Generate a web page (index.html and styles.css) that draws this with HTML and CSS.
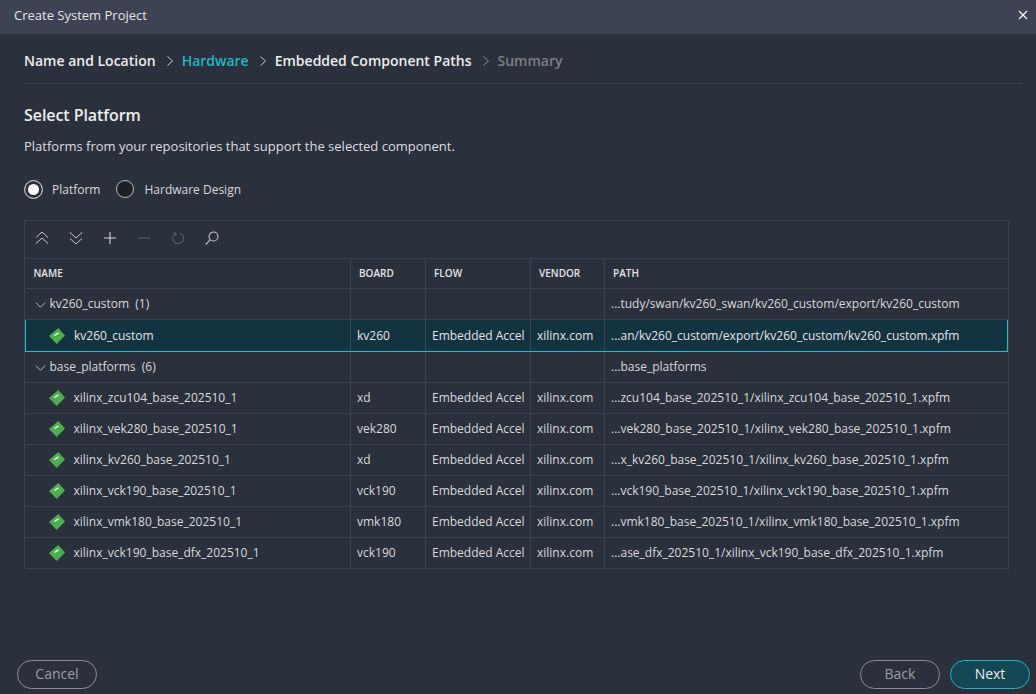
FILE: index.html
```html
<!DOCTYPE html>
<html lang="en">
<head>
<meta charset="utf-8">
<title>Create System Project</title>
<link rel="stylesheet" href="styles.css">
</head>
<body>
<svg class="defs" width="0" height="0">
  <defs>
    <symbol id="plat" viewBox="0 0 16 16">
      <path d="M9.300 0 16 7.600 7.700 16 0 8Z" fill="#4cae4f"/>
      <path d="M5.400 7.500 9.500 4.800" stroke="#fff" stroke-width="1.400" fill="none"/>
    </symbol>
    <symbol id="chev" viewBox="0 0 12 12">
      <path d="M1 4 6 9 11 4" fill="none" stroke="#c4c7cd" stroke-width="1"/>
    </symbol>
  </defs>
</svg>
<div class="dialog">
  <header class="titlebar">
    <span>Create System Project</span>
    <svg class="close" width="10" height="10" viewBox="0 0 10 10"><path d="M1 1 9 9M9 1 1 9" stroke="#fff" stroke-width="1.2"/></svg>
  </header>
  <main class="content">
    <nav class="steps">
      <span class="step">Name and Location</span>
      <svg class="sep" width="8" height="12" viewBox="0 0 8 12"><path d="M1.5 1.5 6.500 6 1.500 10.500" fill="none" stroke="#c4c7cd"/></svg>
      <span class="step active">Hardware</span>
      <svg class="sep" width="8" height="12" viewBox="0 0 8 12"><path d="M1.5 1.5 6.500 6 1.500 10.500" fill="none" stroke="#c4c7cd"/></svg>
      <span class="step">Embedded Component Paths</span>
      <svg class="sep" width="8" height="12" viewBox="0 0 8 12"><path d="M1.5 1.5 6.500 6 1.500 10.500" fill="none" stroke="#8b8f99"/></svg>
      <span class="step muted">Summary</span>
    </nav>
    <h1 class="heading">Select Platform</h1>
    <p class="desc">Platforms from your repositories that support the selected component.</p>
    <div class="radios">
      <span class="radio on"></span><span class="radio-label">Platform</span>
      <span class="radio"></span><span class="radio-label">Hardware Design</span>
    </div>
    <section class="panel">
      <div class="toolbar">
        <svg width="18" height="18" viewBox="0 0 18 18"><path d="M3 8.500 9 3 15 8.500M3 14.500 9 9 15 14.500" fill="none" stroke="#c4c7cd"/></svg>
        <svg width="18" height="18" viewBox="0 0 18 18"><path d="M3 3.500 9 9 15 3.500M3 9.500 9 15 15 9.500" fill="none" stroke="#c4c7cd"/></svg>
        <svg width="18" height="18" viewBox="0 0 18 18"><path d="M9 3V15M3 9H15" fill="none" stroke="#d4d6da" stroke-width="1.100"/></svg>
        <svg width="18" height="18" viewBox="0 0 18 18"><path d="M3 9H15" fill="none" stroke="#565b67" stroke-width="1.100"/></svg>
        <svg width="18" height="18" viewBox="0 0 18 18"><path d="M6.500 4.300A5.500 5.500 0 1 0 11 3.900M4.800 3.300 7.200 4.400 6 6.800" fill="none" stroke="#565b67" stroke-width="1.100"/></svg>
        <svg width="18" height="18" viewBox="0 0 18 18"><circle cx="10.500" cy="7.500" r="4.500" fill="none" stroke="#c4c7cd" stroke-width="1.100"/><path d="M7.300 10.700 2.800 15.500" stroke="#c4c7cd" stroke-width="1.100"/></svg>
      </div>
      <table class="grid">
        <colgroup>
          <col class="c-name"><col class="c-board"><col class="c-flow"><col class="c-vendor"><col class="c-path">
        </colgroup>
        <thead>
          <tr><th>NAME</th><th>BOARD</th><th>FLOW</th><th>VENDOR</th><th>PATH</th></tr>
        </thead>
        <tbody>
          <tr class="group">
            <td><svg class="chev"><use href="#chev"/></svg>kv260_custom&nbsp; (1)</td><td></td><td></td><td></td>
            <td>...tudy/swan/kv260_swan/kv260_custom/export/kv260_custom</td>
          </tr>
          <tr class="selected">
            <td class="leaf"><svg class="plat"><use href="#plat"/></svg>kv260_custom</td><td>kv260</td><td>Embedded Accel</td><td>xilinx.com</td>
            <td>...an/kv260_custom/export/kv260_custom/kv260_custom.xpfm</td>
          </tr>
          <tr class="group">
            <td><svg class="chev"><use href="#chev"/></svg>base_platforms&nbsp; (6)</td><td></td><td></td><td></td>
            <td>...base_platforms</td>
          </tr>
          <tr>
            <td class="leaf"><svg class="plat"><use href="#plat"/></svg>xilinx_zcu104_base_202510_1</td><td>xd</td><td>Embedded Accel</td><td>xilinx.com</td>
            <td>...zcu104_base_202510_1/xilinx_zcu104_base_202510_1.xpfm</td>
          </tr>
          <tr>
            <td class="leaf"><svg class="plat"><use href="#plat"/></svg>xilinx_vek280_base_202510_1</td><td>vek280</td><td>Embedded Accel</td><td>xilinx.com</td>
            <td>...vek280_base_202510_1/xilinx_vek280_base_202510_1.xpfm</td>
          </tr>
          <tr>
            <td class="leaf"><svg class="plat"><use href="#plat"/></svg>xilinx_kv260_base_202510_1</td><td>xd</td><td>Embedded Accel</td><td>xilinx.com</td>
            <td>...x_kv260_base_202510_1/xilinx_kv260_base_202510_1.xpfm</td>
          </tr>
          <tr>
            <td class="leaf"><svg class="plat"><use href="#plat"/></svg>xilinx_vck190_base_202510_1</td><td>vck190</td><td>Embedded Accel</td><td>xilinx.com</td>
            <td>...vck190_base_202510_1/xilinx_vck190_base_202510_1.xpfm</td>
          </tr>
          <tr>
            <td class="leaf"><svg class="plat"><use href="#plat"/></svg>xilinx_vmk180_base_202510_1</td><td>vmk180</td><td>Embedded Accel</td><td>xilinx.com</td>
            <td>...vmk180_base_202510_1/xilinx_vmk180_base_202510_1.xpfm</td>
          </tr>
          <tr>
            <td class="leaf"><svg class="plat"><use href="#plat"/></svg>xilinx_vck190_base_dfx_202510_1</td><td>vck190</td><td>Embedded Accel</td><td>xilinx.com</td>
            <td>...ase_dfx_202510_1/xilinx_vck190_base_dfx_202510_1.xpfm</td>
          </tr>
        </tbody>
      </table>
    </section>
  </main>
  <footer class="actions">
    <button class="btn">Cancel</button>
    <span class="spacer"></span>
    <button class="btn">Back</button>
    <button class="btn primary">Next</button>
  </footer>
</div>
</body>
</html>
```

FILE: styles.css
```css
html, body {
  margin: 0;
  height: 100%;
  overflow: hidden;
}
body {
  background: #2b303d;
  color: #e3e4e7;
  font-family: "Open Sans", "Noto Sans", sans-serif;
  font-size: 12px;
}
.defs { position: absolute; }
.dialog {
  height: 694px;
  display: flex;
  flex-direction: column;
}
.titlebar {
  flex: none;
  height: 34px;
  background: #3d4353;
  display: flex;
  align-items: center;
  justify-content: space-between;
  padding: 0 8px 4px 14px;
  box-sizing: border-box;
  font-size: 13px;
  color: #e3e4e7;
}
.content {
  flex: 1;
  padding: 0 13px 0 24px;
  min-height: 0;
}
.steps {
  height: 50px;
  box-sizing: border-box;
  padding-top: 4px;
  border-bottom: 1px solid #3d4250;
  display: flex;
  align-items: center;
  font-size: 14px;
  font-weight: 600;
  color: #eceded;
}
.sep { margin: 1px 8px 0 10px; }
.step.active { color: #1fb8c3; }
.step.muted { color: #7b7f89; }
.heading {
  margin: 20px 0 0;
  font-size: 16px;
  font-weight: 600;
  letter-spacing: -0.07px;
  line-height: 22px;
  color: #eceded;
}
.desc {
  margin: 11px 0 0;
  font-size: 13px;
  line-height: 18px;
  color: #dcdde0;
}
.radios {
  margin-top: 24px;
  height: 20px;
  display: flex;
  align-items: center;
}
.radio {
  width: 16px;
  height: 16px;
  border: 1px solid #b9bbc0;
  border-radius: 50%;
  background: #1d1f26;
  flex: none;
}
.radio.on {
  width: 17px;
  height: 17px;
  background: #fff;
  box-shadow: inset 0 0 0 3px #2b303d;
}
.radio.on + .radio-label { margin-left: 9px; }
.radio-label {
  margin: 0 16px 0 10px;
  color: #d8d9dc;
  font-size: 12px;
}
.panel {
  margin: 21px 14px 0 0;
  border: 1px solid #3d4250;
  border-bottom: 0;
}
.toolbar {
  height: 37px;
  display: flex;
  align-items: center;
  gap: 16px;
  padding: 0 8px 3px;
  box-sizing: border-box;
}
.grid {
  width: 100%;
  border-collapse: collapse;
  table-layout: fixed;
}
.c-name { width: 325px; }
.c-board { width: 75px; }
.c-flow { width: 105px; }
.c-vendor { width: 74px; }
th, td {
  border: 1px solid #3d4250;
  padding: 0 6px 2px;
  height: 31px;
  box-sizing: border-box;
  white-space: nowrap;
  overflow: hidden;
  text-align: left;
  color: #d8d9dc;
  font-weight: 400;
}
th:first-child, td:first-child { border-left: 0; }
th:last-child, td:last-child { border-right: 0; }
th {
  height: 30px;
  padding-bottom: 2px;
  font-size: 10px;
  font-weight: 600;
  padding-left: 8px;
  color: #e3e4e7;
}
.chev {
  width: 11px;
  height: 11px;
  margin: 0 4px 0 3px;
  vertical-align: -2px;
}
.plat {
  width: 16px;
  height: 16px;
  margin-right: 9px;
  vertical-align: -4px;
}
td.leaf { padding-left: 23px; }
.selected td {
  height: 32px;
  padding-bottom: 0;
  background: #133340;
  border-top: 1px solid #20bec9;
  border-bottom: 1px solid #20bec9;
  color: #e3e4e7;
}
.selected td:first-child { border-left: 1px solid #20bec9; }
.selected td:last-child { border-right: 1px solid #20bec9; }
.actions {
  flex: none;
  display: flex;
  gap: 10px;
  padding: 0 6px 5px 17px;
}
.spacer { flex: 1; }
.btn {
  width: 80px;
  height: 29px;
  border-radius: 15px;
  border: 1px solid #8a8d94;
  background: transparent;
  color: #9b9ea5;
  font: 14px "Open Sans", "Noto Sans", sans-serif;
  padding: 0 0 2px;
}
.btn.primary {
  background: #154653;
  border-color: #20b5c0;
  color: #eceded;
}
```
